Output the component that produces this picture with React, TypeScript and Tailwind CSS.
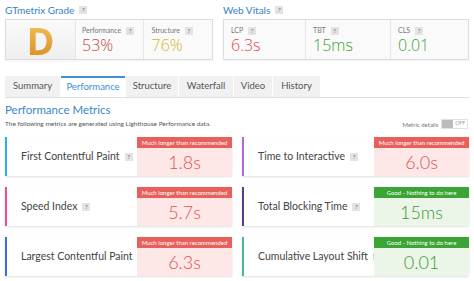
const Q = () => (
  <span className="ml-[5px] inline-flex h-[8px] w-[8px] items-center justify-center bg-[#e3e3e3] text-[6px] font-bold leading-none text-[#888]">
    ?
  </span>
);

const metrics = [
  [
    { name: "First Contentful Paint", value: "1.8s", good: false, bar: "border-[#2ab0e6]" },
    { name: "Time to Interactive", value: "6.0s", good: false, bar: "border-[#b06ad8]" },
  ],
  [
    { name: "Speed Index", value: "5.7s", good: false, bar: "border-[#ec4f8f]" },
    { name: "Total Blocking Time", value: "15ms", good: true, bar: "border-[#5a3d8c]" },
  ],
  [
    { name: "Largest Contentful Paint", value: "6.3s", good: false, bar: "border-[#3b6fdc]" },
    { name: "Cumulative Layout Shift", value: "0.01", good: true, bar: "border-[#3dbb9c]" },
  ],
];

const tabs = ["Summary", "Performance", "Structure", "Waterfall", "Video", "History"];
const tabW = ["w-[55px]", "w-[64px]", "w-[52px]", "w-[54px]", "w-[38px]", "w-[47px]"];

const MetricCard = ({ m }: { m: { name: string; value: string; good: boolean; bar: string } }) => (
  <div className={`flex h-[39px] w-[227px] shrink-0 border-l-2 bg-white shadow-[0_1px_2px_rgba(0,0,0,0.12)] ${m.bar}`}>
    <div className="flex min-w-0 flex-1 items-center whitespace-nowrap pl-[14px] text-[10.5px] text-[#444]">
      {m.name}
      <Q />
    </div>
    <div className={`flex w-[95px] shrink-0 flex-col ${m.good ? "bg-[#ebf6e8]" : "bg-[#fde7e7]"}`}>
      <div
        className={`flex h-[11px] items-center justify-center whitespace-nowrap text-[6px] text-white ${
          m.good ? "bg-[#3aa534]" : "bg-[#e8605c]"
        }`}
      >
        {m.good ? "Good - Nothing to do here" : "Much longer than recommended"}
      </div>
      <div
        className={`flex flex-1 items-center justify-center text-[18px] font-light leading-none ${
          m.good ? "text-[#3c9a37]" : "text-[#dd5454]"
        }`}
      >
        {m.value}
      </div>
    </div>
  </div>
);

export default function App() {
  return (
    <div className="h-[281px] w-[474px] overflow-hidden bg-white px-[5px] pt-[3px] font-['Lato',sans-serif]">
      <div className="flex gap-[10px]">
        <div className="w-[208px]">
          <div className="flex h-[14px] items-center text-[10px] text-[#2f82c8]">
            GTmetrix Grade
            <Q />
          </div>
          <div className="mt-[2px] flex h-[41px] border border-[#dcdcdc] shadow-[0_1px_2px_rgba(0,0,0,0.06)]">
            <div className="flex w-[70px] items-center justify-center border-r border-[#e6e6e6] bg-gradient-to-b from-[#fafafa] to-[#efefef]">
              <span className="bg-gradient-to-b from-[#f3c25a] to-[#d8901f] bg-clip-text font-['Open_Sans',sans-serif] text-[38px] font-bold leading-none text-transparent">
                D
              </span>
            </div>
            <div className="flex flex-1 flex-col justify-center border-r border-[#e6e6e6] bg-[#fafafa] pl-[6px]">
              <div className="flex items-center text-[7px] text-[#777]">
                Performance
                <Q />
              </div>
              <div className="font-['Open_Sans',sans-serif] text-[16px] font-light leading-[18px] text-[#bf4b45]">53%</div>
            </div>
            <div className="flex flex-1 flex-col justify-center bg-[#fafafa] pl-[8px]">
              <div className="flex items-center text-[7px] text-[#777]">
                Structure
                <Q />
              </div>
              <div className="font-['Open_Sans',sans-serif] text-[16px] font-light leading-[18px] text-[#d6b62c]">76%</div>
            </div>
          </div>
        </div>
        <div className="flex-1">
          <div className="flex h-[14px] items-center text-[10px] text-[#2f82c8]">
            Web Vitals
            <Q />
          </div>
          <div className="mt-[2px] flex h-[41px] border border-[#dcdcdc] bg-[#fafafa] shadow-[0_1px_2px_rgba(0,0,0,0.06)]">
            {[
              ["LCP", "6.3s", "text-[#e24c4c]", "w-[82px]"],
              ["TBT", "15ms", "text-[#3c9e37]", "w-[85px]"],
              ["CLS", "0.01", "text-[#3c9e37]", "flex-1"],
            ].map(([k, v, c, w], i) => (
              <div
                key={k}
                className={`flex flex-col justify-center pl-[7px] ${w} ${i < 2 ? "border-r border-[#e6e6e6]" : ""}`}
              >
                <div className="flex items-center text-[7px] text-[#777]">
                  {k}
                  <Q />
                </div>
                <div className={`font-['Open_Sans',sans-serif] text-[16px] font-light leading-[18px] ${c}`}>{v}</div>
              </div>
            ))}
          </div>
        </div>
      </div>

      <div className="mt-[16px] flex h-[22px] gap-[1px] border-b border-[#dedede]">
        {tabs.map((t, i) => (
          <div
            key={t}
            className={`flex items-center justify-center text-[9.5px] ${tabW[i]} ${
              i === 1
                ? "border-t-2 border-[#3d8fd6] bg-white text-[#3d8fd6]"
                : "bg-[#f1f1f1] text-[#555]"
            }`}
          >
            {t}
          </div>
        ))}
      </div>

      <div className="mt-[5px] flex items-end justify-between">
        <div>
          <div className="text-[11.5px] leading-[14px] text-[#3b86cc]">Performance Metrics</div>
          <div className="mt-[3px] text-[6.5px] leading-[8px] text-[#555]">
            The following metrics are generated using Lighthouse Performance data.
          </div>
        </div>
        <div className="mb-[-1px] flex items-center pr-[1px]">
          <span className="text-[6px] text-[#777]">Metric details</span>
          <div className="ml-[3px] flex h-[10px] items-center border border-[#e2e2e2] bg-white">
            <div className="h-[8px] w-[11px] bg-[#bcbcbc]" />
            <span className="px-[2px] text-[5px] text-[#999]">OFF</span>
          </div>
        </div>
      </div>

      <div className="mt-[9px] flex flex-col gap-[11px]">
        {metrics.map((row, i) => (
          <div key={i} className="flex gap-[10px]">
            {row.map((m) => (
              <MetricCard key={m.name} m={m} />
            ))}
          </div>
        ))}
      </div>
    </div>
  );
}
